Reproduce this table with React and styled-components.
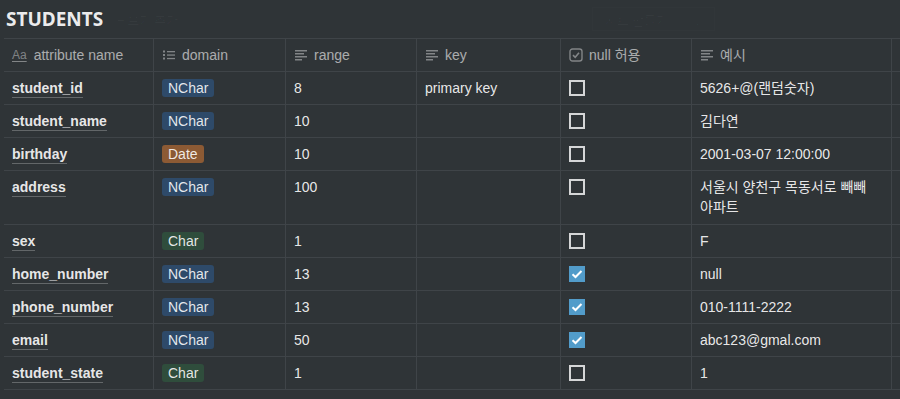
import React from "react";
import styled, { createGlobalStyle } from "styled-components";

const Global = createGlobalStyle`
  html, body { margin: 0; padding: 0; background: #2f3437; }
  body {
    font-family: "Liberation Sans", "Noto Sans CJK KR", sans-serif;
    color: rgba(255, 255, 255, 0.9);
    overflow: hidden;
  }
`;

const Page = styled.div`
  width: 900px;
  height: 399px;
  background: #2f3437;
  overflow: hidden;
`;

const TitleBar = styled.div`
  height: 38px;
  display: flex;
  align-items: center;
  padding-left: 6px;
  gap: 14px;
`;

const Title = styled.h1`
  margin: 0;
  font-family: "Noto Sans", "Noto Sans CJK KR", sans-serif;
  font-size: 19px;
  font-weight: 700;
  color: rgba(255, 255, 255, 0.92);
`;

const Ghost = styled.span`
  font-family: "Noto Sans CJK KR", sans-serif;
  font-size: 13px;
  color: rgba(255, 255, 255, 0.03);
`;

const GhostBox = styled.div`
  margin-left: 400px;
  height: 22px;
  padding: 0 10px 0 12px;
  display: flex;
  align-items: center;
  gap: 10px;
  border: 1px solid rgba(255, 255, 255, 0.012);
  font-family: "Noto Sans CJK KR", sans-serif;
  font-size: 13px;
  color: rgba(255, 255, 255, 0.03);
`;

const Table = styled.div`
  margin-left: 4px;
  border-top: 1px solid #3f4448;
  width: 896px;
`;

const cols = "150px 132px 131px 144px 131px 200px 1fr";

const Row = styled.div`
  display: grid;
  grid-template-columns: ${cols};
  border-bottom: 1px solid #3f4448;
  min-height: ${({ $h }) => $h || 32}px;
`;

const Cell = styled.div`
  box-sizing: border-box;
  border-right: 1px solid #3f4448;
  padding: 6px 6px 6px 8px;
  font-size: 14px;
  line-height: 20px;
  color: rgba(255, 255, 255, 0.9);
  word-break: keep-all;
  &:last-child { border-right: none; }
`;

const HeadCell = styled(Cell)`
  display: flex;
  align-items: center;
  gap: 6px;
  padding-top: 0;
  padding-bottom: 0;
  color: rgba(255, 255, 255, 0.6);
`;

const AaIcon = styled.span`
  font-size: 12px;
  line-height: 12px;
  color: rgba(255, 255, 255, 0.4);
  text-decoration: underline;
  text-underline-offset: 2px;
  margin-right: 1px;
`;

const Name = styled.span`
  font-weight: 700;
  border-bottom: 1px solid rgba(255, 255, 255, 0.25);
  padding-bottom: 1px;
`;

const tagColors = {
  NChar: "#2e4a69",
  Date: "#8c5a34",
  Char: "#2f4d3c",
};

const Tag = styled.span`
  display: inline-block;
  height: 18px;
  line-height: 18px;
  padding: 0 6px;
  border-radius: 3px;
  font-size: 14px;
  background: ${({ $kind }) => tagColors[$kind]};
  color: rgba(255, 255, 255, 0.88);
`;

const Box = styled.span`
  display: inline-block;
  box-sizing: border-box;
  width: 16px;
  height: 16px;
  margin-top: 2px;
  vertical-align: top;
  border: ${({ $on }) => ($on ? "none" : "2px solid rgba(255,255,255,0.8)")};
  background: ${({ $on }) => ($on ? "#529cca" : "transparent")};
  position: relative;
`;

const ListIcon = () => (
  <svg width="14" height="14" viewBox="0 0 14 14" fill="rgba(255,255,255,0.4)">
    <rect x="1" y="2.5" width="2" height="2" />
    <rect x="1" y="6" width="2" height="2" />
    <rect x="1" y="9.5" width="2" height="2" />
    <rect x="5" y="3" width="8" height="1.3" />
    <rect x="5" y="6.4" width="8" height="1.3" />
    <rect x="5" y="9.9" width="8" height="1.3" />
  </svg>
);

const TextIcon = () => (
  <svg width="14" height="14" viewBox="0 0 14 14" fill="rgba(255,255,255,0.4)">
    <rect x="1" y="2" width="12" height="1.5" />
    <rect x="1" y="5" width="9" height="1.5" />
    <rect x="1" y="8" width="12" height="1.5" />
    <rect x="1" y="11" width="7" height="1.5" />
  </svg>
);

const CheckIcon = () => (
  <svg width="14" height="14" viewBox="0 0 14 14" fill="none" stroke="rgba(255,255,255,0.4)">
    <rect x="1" y="1" width="12" height="12" rx="2.5" strokeWidth="1.4" />
    <path d="M4 7.2 L6.2 9.3 L10 4.8" strokeWidth="1.6" />
  </svg>
);

const Check = ({ on }) => (
  <Box $on={on}>
    {on && (
      <svg width="16" height="16" viewBox="0 0 16 16" style={{ position: "absolute", left: 0, top: 0 }}>
        <path d="M3.5 8.2 L6.5 11 L12.5 5" fill="none" stroke="#fff" strokeWidth="2" />
      </svg>
    )}
  </Box>
);

const rows = [
  ["student_id", "NChar", "8", "primary key", false, "5626+@(랜덤숫자)"],
  ["student_name", "NChar", "10", "", false, "김다연"],
  ["birthday", "Date", "10", "", false, "2001-03-07 12:00:00"],
  ["address", "NChar", "100", "", false, "서울시 양천구 목동서로 빼빼 아파트", 53],
  ["sex", "Char", "1", "", false, "F"],
  ["home_number", "NChar", "13", "", true, "null"],
  ["phone_number", "NChar", "13", "", true, "010-1111-2222"],
  ["email", "NChar", "50", "", true, "abc123@gmal.com"],
  ["student_state", "Char", "1", "", false, "1"],
];

export default function App() {
  return (
    <Page>
      <Global />
      <TitleBar>
        <Title>STUDENTS</Title>
        <Ghost>+ 보기 추가</Ghost>
        <GhostBox>
          <span>시트 만들기</span>
          <span>|</span>
          <span>∨</span>
        </GhostBox>
      </TitleBar>
      <Table>
        <Row>
          <HeadCell>
            <AaIcon>Aa</AaIcon>
            <span>attribute name</span>
          </HeadCell>
          <HeadCell>
            <ListIcon />
            <span>domain</span>
          </HeadCell>
          <HeadCell>
            <TextIcon />
            <span>range</span>
          </HeadCell>
          <HeadCell>
            <TextIcon />
            <span>key</span>
          </HeadCell>
          <HeadCell>
            <CheckIcon />
            <span>null 허용</span>
          </HeadCell>
          <HeadCell>
            <TextIcon />
            <span>예시</span>
          </HeadCell>
          <HeadCell />
        </Row>
        {rows.map(([name, dom, range, key, nul, ex, h]) => (
          <Row key={name} $h={h}>
            <Cell>
              <Name>{name}</Name>
            </Cell>
            <Cell>
              <Tag $kind={dom}>{dom}</Tag>
            </Cell>
            <Cell>{range}</Cell>
            <Cell>{key}</Cell>
            <Cell>
              <Check on={nul} />
            </Cell>
            <Cell>{ex}</Cell>
            <Cell />
          </Row>
        ))}
      </Table>
    </Page>
  );
}
